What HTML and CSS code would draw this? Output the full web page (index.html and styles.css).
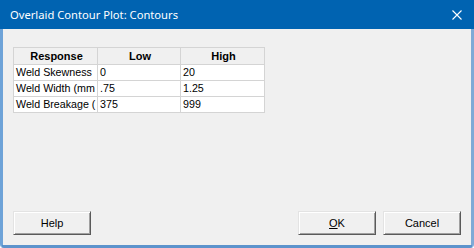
FILE: index.html
```html
<!DOCTYPE html>
<html lang="en">
<head>
    <meta charset="UTF-8">
    <meta name="viewport" content="width=device-width, initial-scale=1.0">
    <title>Overlaid Contour Plot: Contours</title>
    <link rel="stylesheet" href="styles.css">
</head>
<body>
    <div class="window">
        <div class="titlebar">
            <span class="title">Overlaid Contour Plot: Contours</span>
            <svg class="close" width="10" height="10" viewBox="0 0 10 10">
                <path d="M0.5 0.5 L9.5 9.5 M9.5 0.5 L0.5 9.5" stroke="#fff" stroke-width="1.1" fill="none"/>
            </svg>
        </div>
        <div class="content">
            <table class="grid">
                <colgroup>
                    <col class="c1">
                    <col class="c2">
                    <col class="c3">
                </colgroup>
                <thead>
                    <tr>
                        <th>Response</th>
                        <th>Low</th>
                        <th>High</th>
                    </tr>
                </thead>
                <tbody>
                    <tr>
                        <td>Weld Skewness</td>
                        <td>0</td>
                        <td>20</td>
                    </tr>
                    <tr>
                        <td>Weld Width (mm</td>
                        <td>.75</td>
                        <td>1.25</td>
                    </tr>
                    <tr>
                        <td>Weld Breakage (</td>
                        <td>375</td>
                        <td>999</td>
                    </tr>
                </tbody>
            </table>
            <div class="buttons">
                <button class="btn">Help</button>
                <div class="right">
                    <button class="btn"><u>O</u>K</button>
                    <button class="btn">Cancel</button>
                </div>
            </div>
        </div>
    </div>
</body>
</html>
```

FILE: styles.css
```css
body {
    margin: 0;
    background: #fff;
    font-family: 'Liberation Sans', Arial, sans-serif;
}
.window {
    width: 474px;
    height: 248px;
    box-sizing: border-box;
    display: flex;
    flex-direction: column;
    background: #0063b1;
    border-left: 3px solid #6ea3d8;
    border-right: 3px solid #7faad6;
    border-bottom: 3px solid #5d93cc;
    border-radius: 0 0 4px 4px;
}
.titlebar {
    height: 29px;
    display: flex;
    align-items: center;
    justify-content: space-between;
    padding: 0 10px 0 7px;
    margin-left: -3px;
    margin-right: -3px;
    background: #0063b1;
    flex-shrink: 0;
}
.title {
    color: #fff;
    font-family: 'Noto Sans', 'Open Sans', sans-serif;
    font-size: 11.2px;
    padding-left: 3px;
}
.close {
    display: block;
    margin-right: 2px;
}
.content {
    flex: 1;
    background: #f0f0f0;
    display: flex;
    flex-direction: column;
    justify-content: space-between;
    padding: 18px 10px 10px 10px;
}
.grid {
    border-collapse: collapse;
    border: 1px solid #a0a0a0;
    width: 251px;
    table-layout: fixed;
    font-size: 10.7px;
    color: #000;
}
.c1 { width: 84px; }
.c2 { width: 83px; }
.c3 { width: 84px; }
.grid th, .grid td {
    border: 1px solid #d4d4d4;
    height: 15px;
    padding: 0 0 0 2px;
    white-space: nowrap;
    overflow: hidden;
    line-height: 15px;
}
.grid th {
    background: #f0f0f0;
    font-weight: bold;
    font-size: 11px;
    text-align: center;
    height: 16px;
}
.grid td {
    background: #fff;
    text-align: left;
}
.buttons {
    display: flex;
    justify-content: space-between;
}
.right {
    display: flex;
    gap: 7px;
}
.btn {
    width: 78px;
    height: 24px;
    padding: 0;
    font-family: 'Liberation Sans', Arial, sans-serif;
    font-size: 11px;
    color: #000;
    background: #f0f0f0;
    border: 1px solid;
    border-color: #e3e3e3 #5a5a5a #5a5a5a #e3e3e3;
    box-shadow: inset 1px 1px #fff, inset -1px -1px #a0a0a0;
}
```
